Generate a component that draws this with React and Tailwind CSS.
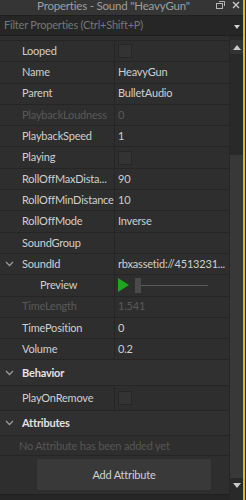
const rows = [
  { name: "Looped", check: true },
  { name: "Name", value: "HeavyGun" },
  { name: "Parent", value: "BulletAudio" },
  { name: "PlaybackLoudness", value: "0", disabled: true },
  { name: "PlaybackSpeed", value: "1" },
  { name: "Playing", check: true },
  { name: "RollOffMaxDista...", value: "90" },
  { name: "RollOffMinDistance", value: "10" },
  { name: "RollOffMode", value: "Inverse" },
  { name: "SoundGroup", value: "" },
  { name: "SoundId", value: "rbxassetid://4513231...", expand: true },
  { name: "Preview", preview: true },
  { name: "TimeLength", value: "1.541", disabled: true },
  { name: "TimePosition", value: "0" },
  { name: "Volume", value: "0.2" },
];

function Chevron() {
  return (
    <svg width="9" height="6" viewBox="0 0 9 6" className="absolute left-[5px] top-1/2 -translate-y-1/2">
      <path d="M1 1 L4.5 4.5 L8 1" fill="none" stroke="#9a9a9a" strokeWidth="1.3" />
    </svg>
  );
}

function Checkbox() {
  return <div className="h-[14px] w-[14px] border border-[#262626] bg-[#333333]" />;
}

function PropRow({ r }) {
  const text = r.disabled ? "text-[#595959]" : "text-[#cfcfcf]";
  return (
    <div className="relative flex h-[21.3px] border-b border-[#252525]">
      {r.expand && <Chevron />}
      <div
        className={`flex w-[115px] shrink-0 items-center overflow-hidden whitespace-nowrap border-r border-[#252525] ${
          r.preview ? "pl-[40px]" : "pl-[22px]"
        } ${text}`}
      >
        {r.name}
      </div>
      <div className={`flex min-w-0 flex-1 items-center overflow-hidden whitespace-nowrap pl-[3px] ${text}`}>
        {r.check && <Checkbox />}
        {r.value}
        {r.preview && (
          <div className="flex items-center">
            <svg width="11" height="14" viewBox="0 0 11 14">
              <path d="M0 0 L11 7 L0 14 Z" fill="#1fa51f" />
            </svg>
            <div className="ml-[6px] h-[15px] w-[6px] bg-[#4a4a4a]" />
            <div className="h-[1px] w-[67px] bg-[#5a5a5a]" />
          </div>
        )}
      </div>
    </div>
  );
}

function Section({ title, h }) {
  return (
    <div className={`relative flex ${h} items-center border-b border-[#252525] bg-[#303030] pl-[22px] font-bold text-[#e2e2e2]`}>
      <Chevron />
      {title}
    </div>
  );
}

export default function App() {
  return (
    <div
      className="flex h-[500px] w-[246px] overflow-hidden bg-[#2e2e2e] text-[11px] tracking-[-0.2px]"
      style={{ fontFamily: "Lato, 'Noto Sans', sans-serif" }}
    >
      <div className="flex w-[243px] flex-col">
        {/* title bar */}
        <div className="relative flex h-[15px] shrink-0 items-start justify-center bg-[#353535]">
          <span className="pr-[16px] text-[11.5px] leading-[11px] text-[#9e9e9e]">
            Properties - Sound "HeavyGun"
          </span>
          <svg width="9" height="8" viewBox="0 0 9 8" className="absolute left-[216px] top-[1px]">
            <rect x="0.5" y="2.5" width="6" height="5" fill="none" stroke="#b5b5b5" />
            <path d="M3 0.5 H8.5 V5" fill="none" stroke="#b5b5b5" />
          </svg>
          <svg width="8" height="8" viewBox="0 0 8 8" className="absolute left-[232px] top-[1px]">
            <path d="M1 1 L7 7 M7 1 L1 7" stroke="#c8c8c8" strokeWidth="1.4" />
          </svg>
        </div>

        {/* filter bar */}
        <div className="relative flex h-[21px] shrink-0 items-center border-y border-[#1f1f1f] bg-[#262626] pl-[4px] text-[11px] text-[#767676]">
          Filter Properties (Ctrl+Shift+P)
          <svg width="6" height="4" viewBox="0 0 6 4" className="absolute right-[3px] top-[9px]">
            <path d="M0 0 H6 L3 4 Z" fill="#d0d0d0" />
          </svg>
        </div>

        <div className="flex flex-1">
          {/* grid */}
          <div className="flex w-[230px] flex-col border-r border-[#262626] pt-[4px]">
            <div className="border-t border-[#252525]">
              {rows.map((r) => (
                <PropRow key={r.name} r={r} />
              ))}
            </div>
            <Section title="Behavior" h="h-[26px]" />
            <div className="flex h-[25px] border-b border-[#252525]">
              <div className="flex w-[115px] shrink-0 items-center border-r border-[#252525] pl-[22px] text-[#cfcfcf]">
                PlayOnRemove
              </div>
              <div className="flex flex-1 items-center pl-[3px]">
                <Checkbox />
              </div>
            </div>
            <Section title="Attributes" h="h-[25px]" />
            <div className="flex h-[20px] items-center border-b border-[#252525] pl-[19px] text-[#565656]">
              No Attribute has been added yet
            </div>
            <div className="flex h-[38px] items-start pt-[3px] pl-[37px]">
              <div className="flex h-[31px] w-[174px] items-center justify-center rounded-[2px] bg-[#393939] text-[#d0d0d0]">
                Add Attribute
              </div>
            </div>
            <div className="flex-1 border-t border-[#202020] bg-[#262626]" />
          </div>

          {/* scrollbar */}
          <div className="flex w-[13px] flex-col bg-[#292929] pt-[4px]">
            <div className="flex h-[14px] items-center justify-center bg-[#333333]">
              <svg width="8" height="5" viewBox="0 0 8 5">
                <path d="M0 5 L4 0 L8 5 Z" fill="#c8c8c8" />
              </svg>
            </div>
            <div className="h-[101px]" />
            <div className="h-[323px] bg-[#383838]" />
            <div className="flex h-[14px] items-center justify-center">
              <svg width="8" height="5" viewBox="0 0 8 5">
                <path d="M0 0 L8 0 L4 5 Z" fill="#c8c8c8" />
              </svg>
            </div>
          </div>
        </div>
      </div>
      <div className="w-[2px] bg-[#d8c21a]" />
      <div className="w-[1px] bg-[#262626]" />
    </div>
  );
}
